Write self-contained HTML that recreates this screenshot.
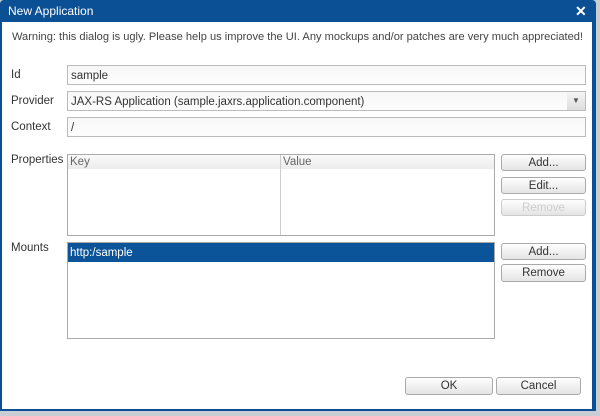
<!DOCTYPE html>
<html><head><style>
*{box-sizing:border-box;margin:0;padding:0}
body{width:600px;height:416px;background:#c9ced4;position:relative;overflow:hidden;font-family:"Liberation Sans",sans-serif;font-size:11.5px;color:#333}
.win{position:absolute;left:0;top:0;width:596px;height:411px;background:#0b4f95;border-radius:4px 4px 0 0}
.title{position:absolute;left:8px;top:4px;color:#fff;font-size:12px}
.x{position:absolute;left:575px;top:3px;color:#fff;font-size:14px;font-weight:bold}
.body{position:absolute;left:2px;top:22px;width:590px;height:387px;background:#fff}
.a{position:absolute}
.lbl{position:absolute;left:11px;font-size:11.5px;color:#333}
.inp{position:absolute;left:67px;width:519px;height:20px;border:1px solid #bbb;background:linear-gradient(#f7f7f7,#fdfdfd);padding:4px 3px 0;font-size:11.5px;color:#333}
.btn{position:absolute;border:1px solid #aaa;border-radius:3px;background:linear-gradient(#fefefe,#e4e4e4);text-align:center;font-size:11.5px;color:#333;line-height:16px}
</style></head><body>
<div class="win">
<div class="title">New Application</div>
<div class="x">✕</div>
</div>
<div class="body"></div>
<div class="a" style="left:12px;top:31px;font-size:11.1px;color:#444;white-space:nowrap">Warning: this dialog is ugly. Please help us improve the UI. Any mockups and/or patches are very much appreciated!</div>
<div class="lbl" style="top:69px">Id</div>
<div class="inp" style="top:65px">sample</div>
<div class="lbl" style="top:95px">Provider</div>
<div class="inp" style="top:91px">JAX-RS Application (sample.jaxrs.application.component)</div>
<div class="a" style="left:567px;top:92px;width:18px;height:18px;background:linear-gradient(#f5f5f5,#ddd);font-size:8px;color:#555;text-align:center;line-height:18px">▼</div>
<div class="lbl" style="top:121px">Context</div>
<div class="inp" style="top:117px">/</div>
<div class="lbl" style="top:154px">Properties</div>
<div class="a" style="left:67px;top:154px;width:428px;height:82px;border:1px solid #aaa;background:#fff">
 <div class="a" style="left:0;top:0;width:426px;height:14px;background:linear-gradient(#fafafa,#ececec)"></div>
 <div class="a" style="left:2px;top:1px;color:#666">Key</div>
 <div class="a" style="left:212px;top:0;width:1px;height:80px;background:#ccc"></div>
 <div class="a" style="left:215px;top:1px;color:#666">Value</div>
</div>
<div class="btn" style="left:501px;top:154px;width:85px;height:17px">Add...</div>
<div class="btn" style="left:501px;top:177px;width:85px;height:17px">Edit...</div>
<div class="btn" style="left:501px;top:199px;width:85px;height:17px;color:#ccc;border-color:#ccc">Remove</div>
<div class="lbl" style="top:242px">Mounts</div>
<div class="a" style="left:67px;top:242px;width:428px;height:97px;border:1px solid #aaa;background:#fff">
 <div class="a" style="left:0;top:0;width:426px;height:19px;background:#0b5499;color:#fff;padding:4px 2px 0">http:/sample</div>
</div>
<div class="btn" style="left:501px;top:243px;width:85px;height:17px">Add...</div>
<div class="btn" style="left:501px;top:264px;width:85px;height:18px">Remove</div>
<div class="btn" style="left:405px;top:377px;width:88px;height:18px">OK</div>
<div class="btn" style="left:496px;top:377px;width:85px;height:18px">Cancel</div>
</body></html>
